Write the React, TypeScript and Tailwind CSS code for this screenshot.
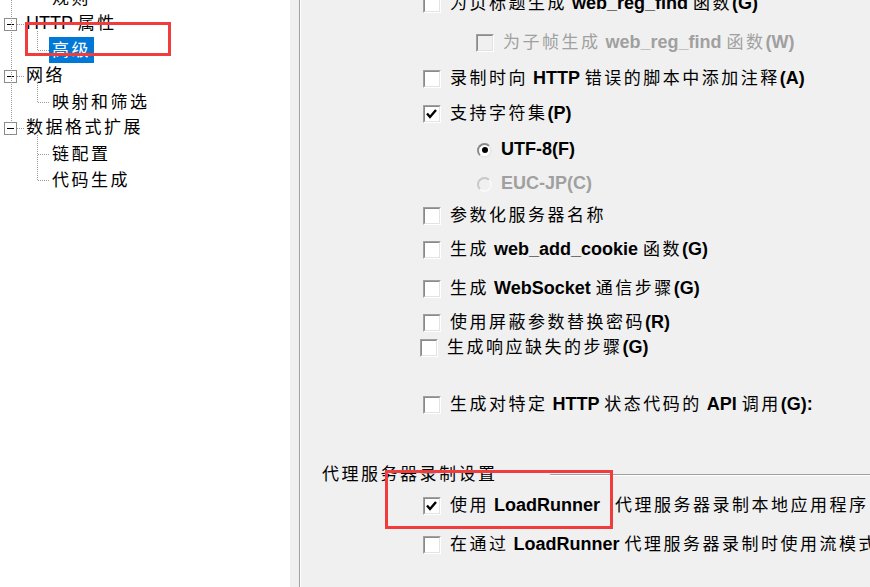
import React from "react";

const CJK = /([\u2E80-\u9FFF\uF900-\uFAFF\uFF00-\uFFEF]+)/;

function Txt({ s, bold }: { s: string; bold?: boolean }) {
  const parts = s.split(CJK).filter((p) => p.length > 0);
  return (
    <span className="whitespace-nowrap leading-none">
      {parts.map((p, i) =>
        CJK.test(p) ? (
          <span key={i} className="text-[17px] tracking-[2.5px] font-normal">
            {p}
          </span>
        ) : (
          <span key={i} className={bold ? "text-[18px] font-bold" : "text-[18px] font-normal"}>
            {p}
          </span>
        )
      )}
    </span>
  );
}

function CheckBox({ checked, disabled }: { checked?: boolean; disabled?: boolean }) {
  return (
    <div className="w-[18px] h-[18px] shrink-0 border border-t-[#a0a0a0] border-l-[#a0a0a0] border-b-white border-r-white">
      <div
        className={
          "w-full h-full border border-t-[#8a8a8a] border-l-[#8a8a8a] border-b-[#e3e3e3] border-r-[#e3e3e3] flex items-start justify-start " +
          (disabled ? "bg-[#f0f0f0]" : "bg-white")
        }
      >
        {checked && (
          <svg width="11" height="10" viewBox="0 0 11 10" className="ml-[1px] mt-[2px]">
            <path d="M1 4.5 L4 8 L10 1" stroke="#000" strokeWidth="2.4" fill="none" />
          </svg>
        )}
      </div>
    </div>
  );
}

function Radio({ checked, disabled }: { checked?: boolean; disabled?: boolean }) {
  return (
    <div
      className={
        "w-[15px] h-[15px] shrink-0 rounded-full border-2 flex items-center justify-center " +
        (disabled
          ? "border-t-[#c8c8c8] border-l-[#c8c8c8] border-b-[#f8f8f8] border-r-[#f8f8f8] bg-[#f0f0f0]"
          : "border-t-[#8a8a8a] border-l-[#8a8a8a] border-b-[#e8e8e8] border-r-[#e8e8e8] bg-white")
      }
    >
      {checked && <div className="w-[6px] h-[6px] rounded-full bg-black" />}
    </div>
  );
}

type RowSpec = {
  mt: string;
  indent: string;
  kind: "cb" | "radio";
  checked?: boolean;
  disabled?: boolean;
  text: string;
};

const rows: RowSpec[] = [
  { mt: "-mt-[8px]", indent: "ml-[122px]", kind: "cb", text: "为页标题生成 web_reg_find 函数(G)" },
  { mt: "mt-[15px]", indent: "ml-[175px]", kind: "cb", disabled: true, text: "为子帧生成 web_reg_find 函数(W)" },
  { mt: "mt-[12px]", indent: "ml-[122px]", kind: "cb", text: "录制时向 HTTP 错误的脚本中添加注释(A)" },
  { mt: "mt-[11px]", indent: "ml-[122px]", kind: "cb", checked: true, text: "支持字符集(P)" },
  { mt: "mt-[12px]", indent: "ml-[176px]", kind: "radio", checked: true, text: "UTF-8(F)" },
  { mt: "mt-[10px]", indent: "ml-[176px]", kind: "radio", disabled: true, text: "EUC-JP(C)" },
  { mt: "mt-[8px]", indent: "ml-[122px]", kind: "cb", text: "参数化服务器名称" },
  { mt: "mt-[10px]", indent: "ml-[122px]", kind: "cb", text: "生成 web_add_cookie 函数(G)" },
  { mt: "mt-[15px]", indent: "ml-[122px]", kind: "cb", text: "生成 WebSocket 通信步骤(G)" },
  { mt: "mt-[10px]", indent: "ml-[122px]", kind: "cb", text: "使用屏蔽参数替换密码(R)" },
  { mt: "mt-[1px]", indent: "ml-[119px]", kind: "cb", text: "生成响应缺失的步骤(G)" },
  { mt: "mt-[33px]", indent: "ml-[122px]", kind: "cb", text: "生成对特定 HTTP 状态代码的 API 调用(G):" },
];

const rows2: RowSpec[] = [
  {
    mt: "mt-[7px]",
    indent: "ml-[122px]",
    kind: "cb",
    checked: true,
    text: "使用 LoadRunner\u00a0\u00a0 代理服务器录制本地应用程序",
  },
  { mt: "mt-[15px]", indent: "ml-[122px]", kind: "cb", text: "在通过 LoadRunner 代理服务器录制时使用流模式" },
];

function OptRow({ r }: { r: RowSpec }) {
  return (
    <div className={"h-6 flex items-center shrink-0 " + r.mt}>
      <div className={r.indent + " flex items-center"}>
        {r.kind === "cb" ? (
          <CheckBox checked={r.checked} disabled={r.disabled} />
        ) : (
          <Radio checked={r.checked} disabled={r.disabled} />
        )}
        <div className={"ml-[9px] " + (r.disabled ? "text-[#a0a0a0]" : "text-black")}>
          <Txt s={r.text} bold />
        </div>
      </div>
    </div>
  );
}

function Expander() {
  return (
    <div className="ml-[4px] w-[13px] h-[13px] border border-[#8c8c8c] bg-white flex items-center justify-center shrink-0">
      <div className="w-[7px] h-px bg-black" />
    </div>
  );
}

type TreeItem = { text: string; level: 0 | 1; selected?: boolean };
const tree: TreeItem[] = [
  { text: "规则", level: 1 },
  { text: "HTTP 属性", level: 0 },
  { text: "高级", level: 1, selected: true },
  { text: "网络", level: 0 },
  { text: "映射和筛选", level: 1 },
  { text: "数据格式扩展", level: 0 },
  { text: "链配置", level: 1 },
  { text: "代码生成", level: 1 },
];

function TreeLines() {
  const d = "1 1";
  const c = "#9a9a9a";
  return (
    <svg className="absolute left-0 top-0 pointer-events-none" width="290" height="587">
      <line x1="11.5" y1="0" x2="11.5" y2="122" stroke={c} strokeDasharray={d} />
      {[24.5, 76.5, 128.5].map((y) => (
        <line key={y} x1="17" y1={y} x2="25" y2={y} stroke={c} strokeDasharray={d} />
      ))}
      <line x1="37.5" y1="31" x2="37.5" y2="50" stroke={c} strokeDasharray={d} />
      <line x1="37.5" y1="83" x2="37.5" y2="102" stroke={c} strokeDasharray={d} />
      <line x1="37.5" y1="135" x2="37.5" y2="180" stroke={c} strokeDasharray={d} />
      {[50.5, 102.5, 154.5, 180.5].map((y) => (
        <line key={y} x1="38" y1={y} x2="49" y2={y} stroke={c} strokeDasharray={d} />
      ))}
    </svg>
  );
}

export default function App() {
  return (
    <div
      className="w-[870px] h-[587px] relative overflow-hidden flex bg-[#f0f0f0] text-black"
      style={{ fontFamily: "'Liberation Sans', 'Noto Sans CJK SC', sans-serif" }}
    >
      {/* left tree panel */}
      <div className="w-[290px] h-full bg-white relative shrink-0 overflow-hidden">
        <div className="flex flex-col -mt-[15px]">
          {tree.map((t, i) =>
            t.level === 0 ? (
              <div key={i} className="h-[26px] flex items-center">
                <Expander />
                <div className="ml-[9px]">
                  <Txt s={t.text} />
                </div>
              </div>
            ) : (
              <div key={i} className="h-[26px] flex items-stretch">
                <div
                  className={
                    "ml-[49px] px-[3px] flex items-center " +
                    (t.selected ? "bg-[#0078d7] text-white" : "text-black")
                  }
                >
                  <Txt s={t.text} />
                </div>
              </div>
            )
          )}
        </div>
        <TreeLines />
      </div>

      {/* splitter */}
      <div className="w-[9px] h-full shrink-0 bg-[#f0f0f0]" />
      <div className="w-px h-full shrink-0 bg-[#a0a0a0]" />
      <div className="w-px h-full shrink-0 bg-white" />

      {/* right options panel */}
      <div className="flex-1 h-full overflow-hidden flex flex-col">
        {rows.map((r, i) => (
          <OptRow key={i} r={r} />
        ))}
        <div className="h-6 mt-[46px] flex items-center shrink-0">
          <div className="ml-[21px] w-[228px] shrink-0">
            <Txt s="代理服务器录制设置" />
          </div>
          <div className="flex-1 h-[2px] border-t border-t-[#a0a0a0] border-b border-b-white" />
        </div>
        {rows2.map((r, i) => (
          <OptRow key={i} r={r} />
        ))}
      </div>

      {/* red annotation boxes */}
      <div className="absolute left-[25px] top-[22px] w-[146px] h-[34px] border-[3px] border-[#f03c3c]" />
      <div className="absolute left-[385px] top-[470px] w-[228px] h-[59px] border-[3px] border-[#f03c3c]" />
    </div>
  );
}
